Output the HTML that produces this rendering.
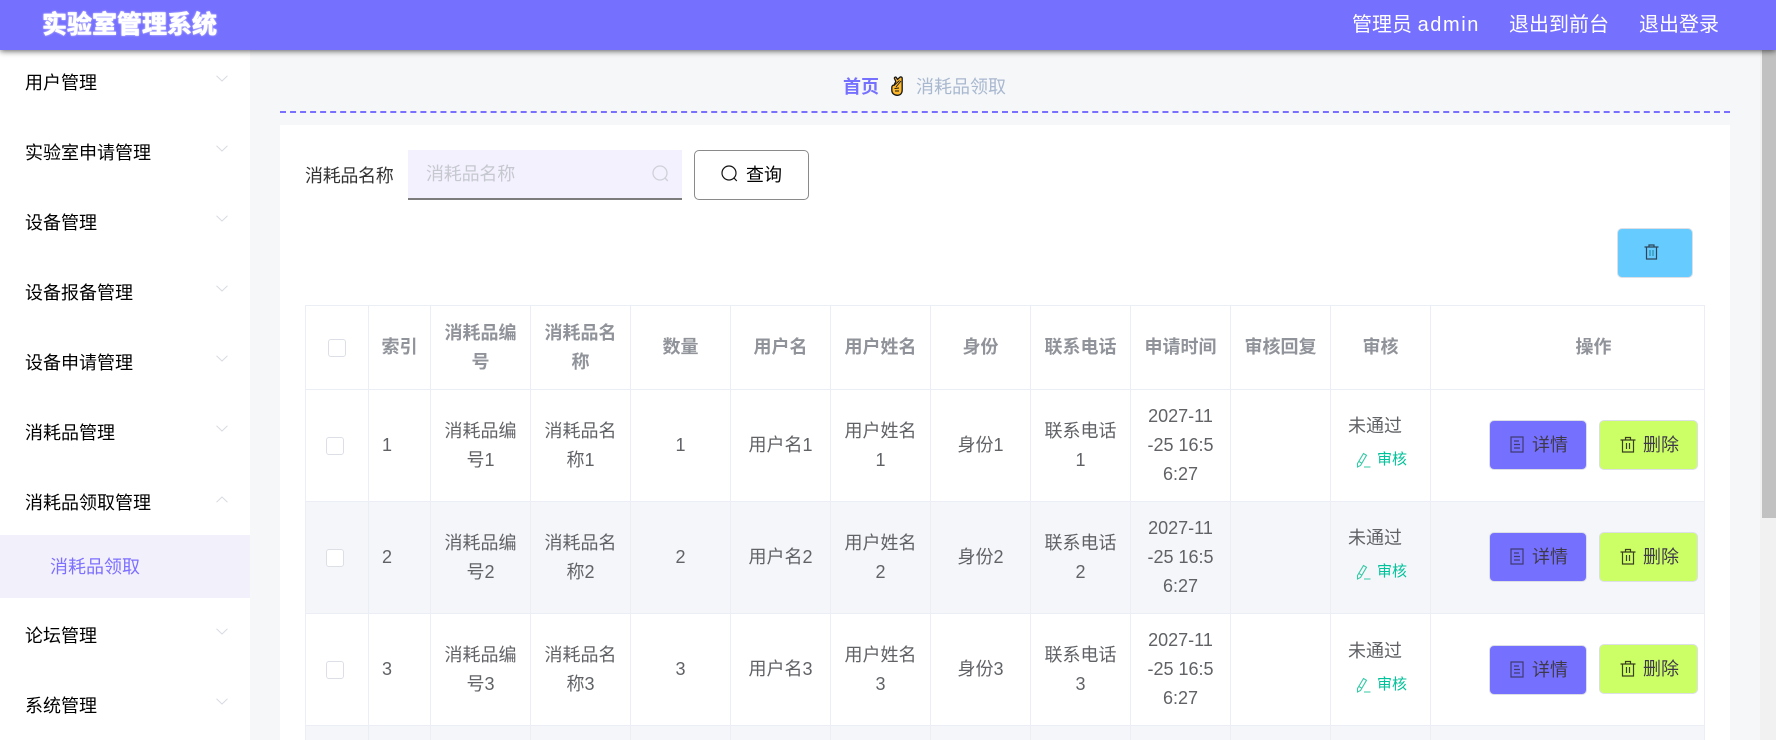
<!DOCTYPE html>
<html lang="zh-CN">
<head>
<meta charset="utf-8">
<title>实验室管理系统</title>
<style>
*{box-sizing:border-box;margin:0;padding:0}
html,body{width:1776px;height:740px;overflow:hidden;background:#f6f7f9;font-family:"Liberation Sans","Noto Sans CJK SC",sans-serif;font-size:18px}
.abs,.abs *{white-space:nowrap}
.abs{position:absolute}
#hd{position:absolute;left:0;top:0;width:1776px;height:50px;background:#7670ff;box-shadow:0 1px 6px rgba(0,0,0,.65);z-index:5;color:#fff}
#hd .abs{line-height:50px;top:0;font-size:20px}
#side{position:absolute;left:0;top:50px;width:250px;height:690px;background:#fff}
.mi{position:absolute;left:25px;font-size:18px;line-height:26px;color:#000}
.chev{position:absolute;left:216px;width:12px;height:7px}
#sub{position:absolute;left:0;top:485px;width:250px;height:63px;background:#f2f1fb;color:#7d6fff;font-size:18px;line-height:65px;padding-left:50px}
#sb{position:absolute;left:1760px;top:50px;width:16px;height:690px;background:#f1f1f1}
#th{position:absolute;left:1762px;top:50px;width:14px;height:468px;background:#c1c1c1}
#card{position:absolute;left:280px;top:125px;width:1450px;height:615px;background:#fff}
#dash{position:absolute;left:280px;top:111px;width:1450px;height:2px;border-top:2px dashed #7a70ff}
table{position:absolute;left:305px;top:305px;width:1400px;border-collapse:separate;border-spacing:0;table-layout:fixed;color:#606266;font-size:18px;line-height:29px;text-align:center}
td,th{border-left:1px solid #ebeef5;border-top:1px solid #ebeef5;vertical-align:middle;white-space:nowrap;padding:0}
th{color:#909399;font-weight:bold;height:84px}
td{height:112px}
tr td:last-child,tr th:last-child{border-right:1px solid #ebeef5}
tr.s td{background:#f5f6fa}
tr.l td{height:15px}
.cb{position:absolute;width:18px;height:18px;background:#fff;border:1px solid #dcdfe6;border-radius:3px}
.btn{position:absolute;height:50px;border:1px solid #dcdfe6;border-radius:5px;color:#3f3a4a;font-size:18px;line-height:49px}
.btn span{position:absolute;top:0}
.btn svg{position:absolute}
.b1{left:1489px;width:98px;background:#7670ff}
.b2{left:1599px;width:99px;background:#ccff66}
.st{position:absolute;left:1348px;color:#606266;font-size:18px;line-height:26px}
.au{position:absolute;left:1377px;color:#00c29a;font-size:15px;line-height:20px}
.pen{position:absolute;left:1356px;width:15px;height:16px}
</style>
</head>
<body>
<div id="side">
  <div class="mi" style="top:20px">用户管理</div>
  <div class="mi" style="top:90px">实验室申请管理</div>
  <div class="mi" style="top:160px">设备管理</div>
  <div class="mi" style="top:230px">设备报备管理</div>
  <div class="mi" style="top:300px">设备申请管理</div>
  <div class="mi" style="top:370px">消耗品管理</div>
  <div class="mi" style="top:440px">消耗品领取管理</div>
  <div id="sub">消耗品领取</div>
  <div class="mi" style="top:573px">论坛管理</div>
  <div class="mi" style="top:643px">系统管理</div>
  <svg class="chev" style="top:25px" viewBox="0 0 12 7"><path d="M.5.8 6 6 11.5.8" fill="none" stroke="#d9dbe3"/></svg>
  <svg class="chev" style="top:95px" viewBox="0 0 12 7"><path d="M.5.8 6 6 11.5.8" fill="none" stroke="#d9dbe3"/></svg>
  <svg class="chev" style="top:165px" viewBox="0 0 12 7"><path d="M.5.8 6 6 11.5.8" fill="none" stroke="#d9dbe3"/></svg>
  <svg class="chev" style="top:235px" viewBox="0 0 12 7"><path d="M.5.8 6 6 11.5.8" fill="none" stroke="#d9dbe3"/></svg>
  <svg class="chev" style="top:305px" viewBox="0 0 12 7"><path d="M.5.8 6 6 11.5.8" fill="none" stroke="#d9dbe3"/></svg>
  <svg class="chev" style="top:375px" viewBox="0 0 12 7"><path d="M.5.8 6 6 11.5.8" fill="none" stroke="#d9dbe3"/></svg>
  <svg class="chev" style="top:446px" viewBox="0 0 12 7"><path d="M.5 6.2 6 1 11.5 6.2" fill="none" stroke="#d9dbe3"/></svg>
  <svg class="chev" style="top:578px" viewBox="0 0 12 7"><path d="M.5.8 6 6 11.5.8" fill="none" stroke="#d9dbe3"/></svg>
  <svg class="chev" style="top:648px" viewBox="0 0 12 7"><path d="M.5.8 6 6 11.5.8" fill="none" stroke="#d9dbe3"/></svg>
</div>

<div id="sb"></div><div id="th"></div>

<div class="abs" style="left:843px;top:74px;line-height:26px;font-weight:bold;color:#7670ff">首页</div>
<svg class="abs" style="left:891px;top:76px" width="12" height="20" viewBox="0 0 12 20">
  <path d="M.8 11.500C.8 10 1.800 9 3 9.200L4.800 5.500 3.500 2.600C3 1.400 4.700.5 5.400 1.600L6.500 3.400 8.800 1.300C9.500.6 11.300 1 11.200 2.300V14c0 3.400-2 5.300-5 5.300S.8 17.300.8 14.200Z" fill="#fdb82c" stroke="#161616" stroke-width="1.300" stroke-linejoin="round"/>
  <path d="M3 9.500 8.500 4.500M5 11l5-6M3.500 12.500l4.500-.5M4 15h4" stroke="#161616" stroke-width=".9" fill="none"/>
</svg>
<div class="abs" style="left:916px;top:74px;line-height:26px;color:#a8b8cf">消耗品领取</div>
<div id="dash"></div>
<div id="card"></div>

<div class="abs" style="left:305px;top:163px;line-height:26px;color:#333;letter-spacing:-.3px">消耗品名称</div>
<div class="abs" style="left:408px;top:150px;width:274px;height:50px;background:#f3f1fd;border-bottom:2px solid #7c7c7c"></div>
<div class="abs" style="left:426px;top:161px;line-height:26px;color:#c6c8d0;letter-spacing:-.2px">消耗品名称</div>
<svg class="abs" style="left:652px;top:165px" width="17" height="18" viewBox="0 0 17 18" fill="none" stroke="#cfd1d9" stroke-width="1.300"><circle cx="8" cy="8" r="7"/><path d="M13 13 15.800 16"/></svg>
<div class="abs" style="left:694px;top:150px;width:115px;height:50px;background:#fff;border:1px solid #8a8a8a;border-radius:5px"></div>
<svg class="abs" style="left:721px;top:165px" width="17" height="18" viewBox="0 0 17 18" fill="none" stroke="#111" stroke-width="1.200"><circle cx="8" cy="8" r="7"/><path d="M13 13 15.800 16"/></svg>
<div class="abs" style="left:746px;top:162px;line-height:26px;color:#000">查询</div>

<div class="abs" style="left:1617px;top:228px;width:76px;height:50px;background:#66ccff;border:1px solid #dcdfe6;border-radius:5px"></div>
<svg class="abs" style="left:1644px;top:244px" width="15" height="16" viewBox="0 0 15 16" fill="none" stroke="#2f4458" stroke-width="1.200"><path d="M.5 3h14M2.500 3v12h10V3M5 3V1h5v2"/><path d="M6 6v6M9 6v6" stroke="#2f8fa8"/></svg>

<table>
<colgroup><col style="width:63px"><col style="width:62px"><col style="width:100px"><col style="width:100px"><col style="width:100px"><col style="width:100px"><col style="width:100px"><col style="width:100px"><col style="width:100px"><col style="width:100px"><col style="width:100px"><col style="width:100px"><col style="width:275px"></colgroup>
<tr><th></th><th>索引</th><th>消耗品编<br>号</th><th>消耗品名<br>称</th><th>数量</th><th>用户名</th><th>用户姓名</th><th>身份</th><th>联系电话</th><th>申请时间</th><th>审核回复</th><th>审核</th><th style="padding-left:52px">操作</th></tr>
<tr><td></td><td style="text-align:left;padding-left:13px">1</td><td>消耗品编<br>号1</td><td>消耗品名<br>称1</td><td>1</td><td>用户名1</td><td>用户姓名<br>1</td><td>身份1</td><td>联系电话<br>1</td><td>2027-11<br>-25 16:5<br>6:27</td><td></td><td></td><td></td></tr>
<tr class="s"><td></td><td style="text-align:left;padding-left:13px">2</td><td>消耗品编<br>号2</td><td>消耗品名<br>称2</td><td>2</td><td>用户名2</td><td>用户姓名<br>2</td><td>身份2</td><td>联系电话<br>2</td><td>2027-11<br>-25 16:5<br>6:27</td><td></td><td></td><td></td></tr>
<tr><td></td><td style="text-align:left;padding-left:13px">3</td><td>消耗品编<br>号3</td><td>消耗品名<br>称3</td><td>3</td><td>用户名3</td><td>用户姓名<br>3</td><td>身份3</td><td>联系电话<br>3</td><td>2027-11<br>-25 16:5<br>6:27</td><td></td><td></td><td></td></tr>
<tr class="s l"><td></td><td></td><td></td><td></td><td></td><td></td><td></td><td></td><td></td><td></td><td></td><td></td><td></td></tr>
</table>

<div class="cb" style="left:328px;top:339px"></div>
<div class="cb" style="left:326px;top:437px"></div>
<div class="cb" style="left:326px;top:549px"></div>
<div class="cb" style="left:326px;top:661px"></div>

<div class="st" style="top:413px">未通过</div>
<div class="st" style="top:525px">未通过</div>
<div class="st" style="top:638px">未通过</div>
<svg class="pen" style="top:452px" viewBox="0 0 15 16" fill="none" stroke="#35c9a6" stroke-width="1.100"><path d="M1.500 11.500 7.500 1.500l3 1.800-6 10.200-3 1.500zM3 9.500l3 1.800M8 15h6.500"/></svg>
<svg class="pen" style="top:564px" viewBox="0 0 15 16" fill="none" stroke="#35c9a6" stroke-width="1.100"><path d="M1.500 11.500 7.500 1.500l3 1.800-6 10.200-3 1.500zM3 9.500l3 1.800M8 15h6.500"/></svg>
<svg class="pen" style="top:677px" viewBox="0 0 15 16" fill="none" stroke="#35c9a6" stroke-width="1.100"><path d="M1.500 11.500 7.500 1.500l3 1.800-6 10.200-3 1.500zM3 9.500l3 1.800M8 15h6.500"/></svg>
<div class="au" style="top:450px">审核</div>
<div class="au" style="top:562px">审核</div>
<div class="au" style="top:675px">审核</div>

<div class="btn b1" style="top:420px"><svg style="left:20px;top:15px" width="14" height="17" viewBox="0 0 14 17" fill="none" stroke="#3f3a70" stroke-width="1.200"><path d="M1 1h12v15H1zM4 5h5M4 8.500h6M4 12h6"/></svg><span style="left:42px">详情</span></div>
<div class="btn b2" style="top:420px"><svg style="left:20px;top:15px" width="16" height="17" viewBox="0 0 16 17" fill="none" stroke="#3a3f1c" stroke-width="1.200"><path d="M.5 4h15M2.500 4v12h11V4M5.500 4V1.500h5V4M6.500 7v6M9.500 7v6"/></svg><span style="left:43px">删除</span></div>
<div class="btn b1" style="top:532px"><svg style="left:20px;top:15px" width="14" height="17" viewBox="0 0 14 17" fill="none" stroke="#3f3a70" stroke-width="1.200"><path d="M1 1h12v15H1zM4 5h5M4 8.500h6M4 12h6"/></svg><span style="left:42px">详情</span></div>
<div class="btn b2" style="top:532px"><svg style="left:20px;top:15px" width="16" height="17" viewBox="0 0 16 17" fill="none" stroke="#3a3f1c" stroke-width="1.200"><path d="M.5 4h15M2.500 4v12h11V4M5.500 4V1.500h5V4M6.500 7v6M9.500 7v6"/></svg><span style="left:43px">删除</span></div>
<div class="btn b1" style="top:645px"><svg style="left:20px;top:15px" width="14" height="17" viewBox="0 0 14 17" fill="none" stroke="#3f3a70" stroke-width="1.200"><path d="M1 1h12v15H1zM4 5h5M4 8.500h6M4 12h6"/></svg><span style="left:42px">详情</span></div>
<div class="btn b2" style="top:644px"><svg style="left:20px;top:15px" width="16" height="17" viewBox="0 0 16 17" fill="none" stroke="#3a3f1c" stroke-width="1.200"><path d="M.5 4h15M2.500 4v12h11V4M5.500 4V1.500h5V4M6.500 7v6M9.500 7v6"/></svg><span style="left:43px">删除</span></div>

<div id="hd">
  <div class="abs" style="left:42px;font-size:25px;font-weight:bold;-webkit-text-stroke:.6px #fff;text-shadow:0 0 2px #fff">实验室管理系统</div>
  <div class="abs" style="left:1352px">管理员 <span style="letter-spacing:1.600px">admin</span></div>
  <div class="abs" style="left:1509px">退出到前台</div>
  <div class="abs" style="left:1639px">退出登录</div>
</div>
</body>
</html>
